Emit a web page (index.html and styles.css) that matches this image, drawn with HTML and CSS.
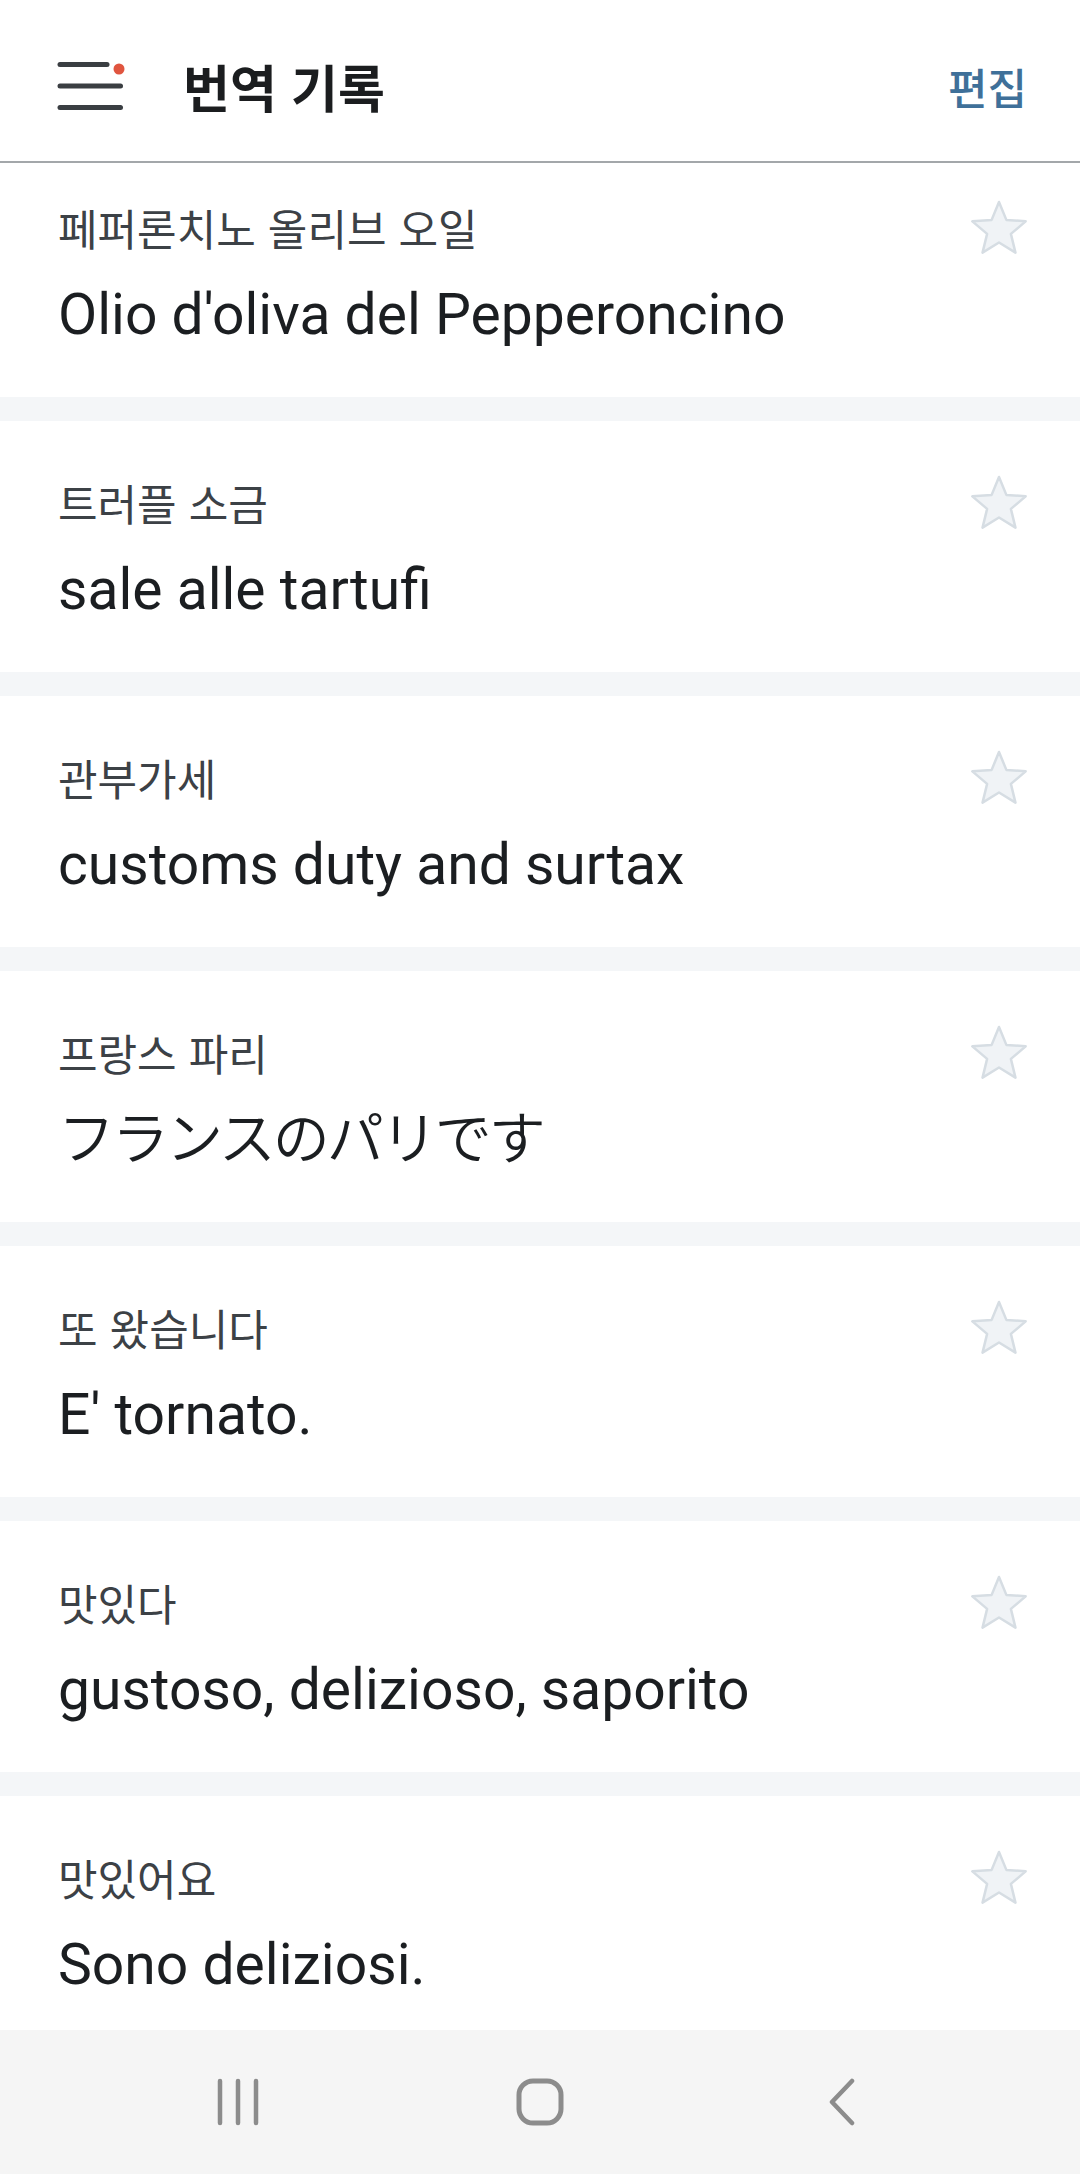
FILE: index.html
```html
<!DOCTYPE html>
<html lang="ko">
<head>
    <meta charset="UTF-8">
    <meta name="viewport" content="width=device-width, initial-scale=1.0">
    <title>번역 기록</title>
    <link rel="stylesheet" href="styles.css">
</head>
<body>
    <div class="screen">
        <header class="topbar">
            <svg class="menu-icon" width="70" height="52" viewBox="0 0 70 52">
                <line x1="5" y1="4.5" x2="52" y2="4.5"/>
                <line x1="5" y1="26" x2="65.5" y2="26"/>
                <line x1="5" y1="47.5" x2="65.5" y2="47.5"/>
                <circle class="dot" cx="64" cy="9" r="5.5"/>
            </svg>
            <h1 class="title">번역 기록</h1>
            <span class="edit">편집</span>
        </header>

        <div class="history">
            <div class="entry">
                <div class="entry-text">
                    <div class="src">페퍼론치노 올리브 오일</div>
                    <div class="dst">Olio d'oliva del Pepperoncino</div>
                </div>
                <svg class="star" width="60" height="58" viewBox="0 0 60 58"><polygon points="30,3 37.35,20.89 56.63,22.35 41.89,34.86 46.46,53.65 30,43.5 13.54,53.65 18.11,34.86 3.37,22.35 22.65,20.89"/></svg>
            </div>
            <div class="entry">
                <div class="entry-text">
                    <div class="src">트러플 소금</div>
                    <div class="dst">sale alle tartufi</div>
                </div>
                <svg class="star" width="60" height="58" viewBox="0 0 60 58"><polygon points="30,3 37.35,20.89 56.63,22.35 41.89,34.86 46.46,53.65 30,43.5 13.54,53.65 18.11,34.86 3.37,22.35 22.65,20.89"/></svg>
            </div>
            <div class="entry">
                <div class="entry-text">
                    <div class="src">관부가세</div>
                    <div class="dst">customs duty and surtax</div>
                </div>
                <svg class="star" width="60" height="58" viewBox="0 0 60 58"><polygon points="30,3 37.35,20.89 56.63,22.35 41.89,34.86 46.46,53.65 30,43.5 13.54,53.65 18.11,34.86 3.37,22.35 22.65,20.89"/></svg>
            </div>
            <div class="entry">
                <div class="entry-text">
                    <div class="src">프랑스 파리</div>
                    <div class="dst ja">フランスのパリです</div>
                </div>
                <svg class="star" width="60" height="58" viewBox="0 0 60 58"><polygon points="30,3 37.35,20.89 56.63,22.35 41.89,34.86 46.46,53.65 30,43.5 13.54,53.65 18.11,34.86 3.37,22.35 22.65,20.89"/></svg>
            </div>
            <div class="entry">
                <div class="entry-text">
                    <div class="src">또 왔습니다</div>
                    <div class="dst">E' tornato.</div>
                </div>
                <svg class="star" width="60" height="58" viewBox="0 0 60 58"><polygon points="30,3 37.35,20.89 56.63,22.35 41.89,34.86 46.46,53.65 30,43.5 13.54,53.65 18.11,34.86 3.37,22.35 22.65,20.89"/></svg>
            </div>
            <div class="entry">
                <div class="entry-text">
                    <div class="src">맛있다</div>
                    <div class="dst">gustoso, delizioso, saporito</div>
                </div>
                <svg class="star" width="60" height="58" viewBox="0 0 60 58"><polygon points="30,3 37.35,20.89 56.63,22.35 41.89,34.86 46.46,53.65 30,43.5 13.54,53.65 18.11,34.86 3.37,22.35 22.65,20.89"/></svg>
            </div>
            <div class="entry">
                <div class="entry-text">
                    <div class="src">맛있어요</div>
                    <div class="dst">Sono deliziosi.</div>
                </div>
                <svg class="star" width="60" height="58" viewBox="0 0 60 58"><polygon points="30,3 37.35,20.89 56.63,22.35 41.89,34.86 46.46,53.65 30,43.5 13.54,53.65 18.11,34.86 3.37,22.35 22.65,20.89"/></svg>
            </div>
        </div>

        <nav class="navbar">
            <svg class="nav-icon" width="48" height="48" viewBox="0 0 48 48">
                <line x1="6" y1="3" x2="6" y2="45"/>
                <line x1="24" y1="3" x2="24" y2="45"/>
                <line x1="42" y1="3" x2="42" y2="45"/>
            </svg>
            <svg class="nav-icon home" width="48" height="48" viewBox="0 0 48 48">
                <rect x="3" y="3" width="42" height="42" rx="14"/>
            </svg>
            <svg class="nav-icon" width="48" height="48" viewBox="0 0 48 48">
                <polyline points="34,3 14,24 34,45"/>
            </svg>
        </nav>
    </div>
</body>
</html>
```

FILE: styles.css
```css
* { box-sizing: border-box; margin: 0; padding: 0; }
body { background: #fff; font-family: Roboto, "Noto Sans CJK KR", sans-serif; }
.screen { width: 1080px; height: 2174px; display: flex; flex-direction: column; overflow: hidden; }

/* top bar */
.topbar { flex: none; height: 163px; padding: 11px 53px 0 55px; border-bottom: 2px solid #a3a7aa; display: flex; align-items: center; background: #fff; position: relative; z-index: 1; }
.menu-icon line { stroke: #3a3e42; stroke-width: 5; stroke-linecap: round; }
.menu-icon .dot { fill: #e0553f; }
.title { margin-left: 58px; font-family: "Noto Sans CJK KR", sans-serif; font-size: 51px; font-weight: 700; color: #1b1d1f; }
.edit { margin-left: auto; font-family: "Noto Sans CJK KR", sans-serif; font-size: 43px; font-weight: 500; color: #3f7099; }

/* history list */
.history { flex: 1; overflow: hidden; background: #f4f6f8; display: flex; flex-direction: column; gap: 24px; }
.entry { flex: none; height: 251px; background: #fff; display: flex; padding: 56px 51px 0 58px; }
.entry:first-child { margin-top: -17px; }
.entry-text { flex: 1; }
.src { font-family: "Noto Sans CJK KR", sans-serif; font-size: 43px; line-height: 50px; color: #3c4146; }
.dst { margin-top: 28px; font-family: Roboto, "Noto Sans CJK JP", sans-serif; font-size: 57px; line-height: 70px; color: #1b1e21; white-space: nowrap; }
.dst.ja { letter-spacing: -3px; font-weight: 350; }
.star { flex: none; margin-top: -3px; }
.star polygon { fill: #f0f3f6; stroke: #d6dde3; stroke-width: 2.5; stroke-linejoin: round; }

/* system nav */
.navbar { flex: none; height: 144px; background: #f5f5f5; display: flex; align-items: center; justify-content: center; gap: 254px; }
.nav-icon line, .nav-icon polyline, .nav-icon rect { fill: none; stroke: #8c8c8c; stroke-width: 4.5; stroke-linecap: round; stroke-linejoin: round; }
.nav-icon.home rect { stroke-width: 5; }
```
